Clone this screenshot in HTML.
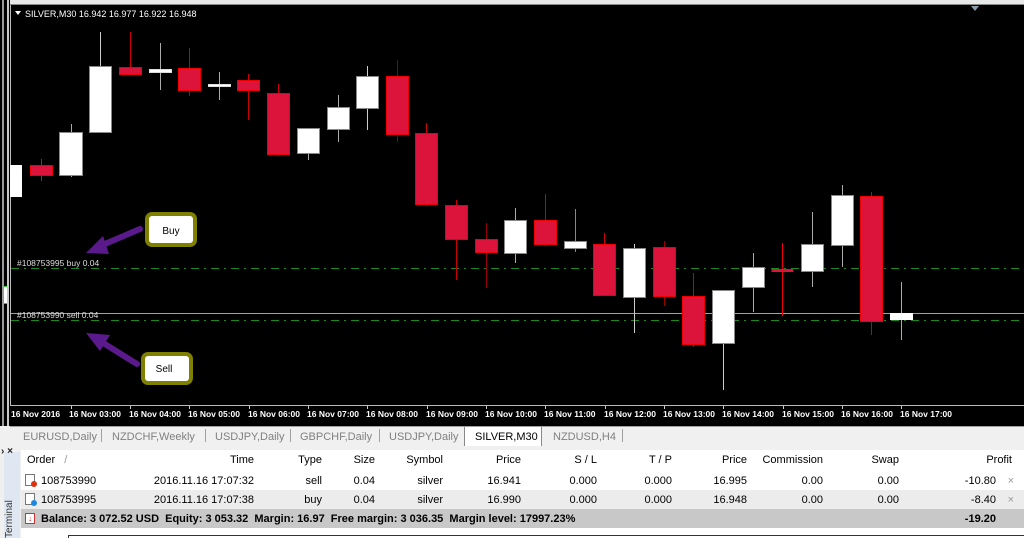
<!DOCTYPE html>
<html><head><meta charset="utf-8"><style>
*{margin:0;padding:0;box-sizing:border-box}
body{width:1024px;height:538px;overflow:hidden;background:#f0f0f0;font-family:"Liberation Sans",sans-serif;position:relative}
.abs{position:absolute}
.tabs{left:10px;top:426px;width:1014px;height:19px;background:#f0f0f0;border-top:1px solid #a0a0a0;font-size:11px;color:#808080}
.tab{position:absolute;top:4px}
.sep{position:absolute;top:2px;width:1px;height:13px;background:#a0a0a0}
.tbl{left:21px;top:450px;width:1003px;height:80px;font-size:11px;color:#000}
.row{position:absolute;left:0;width:1003px;height:19px}
.c{position:absolute;top:4px;text-align:right}
</style></head><body>
<div class="abs" style="left:0;top:0;width:1024px;height:5px;background:#e8e8e8;border-bottom:1px solid #888"></div>
<div class="abs" style="left:0;top:0;width:10px;height:426px;background:#000"></div>
<div class="abs" style="left:2px;top:0;width:2px;height:426px;background:#9a9a9a"></div>
<div class="abs" style="left:7px;top:0;width:2px;height:426px;background:#c8c8c8"></div>
<div class="abs" style="left:4px;top:286px;width:3px;height:18px;background:#fff;border-top:1px solid #3c3;border-bottom:1px solid #3c3"></div>
<svg class="abs" style="left:10px;top:5px" width="1014" height="421" viewBox="10 5 1014 421" font-family="Liberation Sans, sans-serif">
<rect x="10" y="5" width="1014" height="421" fill="#000"/>
<line x1="10.5" y1="5" x2="10.5" y2="405" stroke="#bbb"/>
<line x1="10" y1="405.5" x2="1024" y2="405.5" stroke="#bbb"/>
<polygon points="971,6 979,6 975,11" fill="#8a9aa8"/>
<polygon points="15,11 21,11 18,15" fill="#fff"/>
<text x="25" y="17" fill="#fff" font-size="9">SILVER,M30  16.942 16.977 16.922 16.948</text>
<g stroke="#1a8a1a" stroke-width="1" stroke-dasharray="8,5,2,5">
<line x1="11" y1="268.5" x2="1024" y2="268.5"/>
<line x1="11" y1="320.5" x2="1024" y2="320.5"/>
</g>
<line x1="11" y1="313.5" x2="1024" y2="313.5" stroke="#a0a0a8"/>
<text x="17" y="266" fill="#ddd" font-size="8.5">#108753995 buy 0.04</text>
<text x="17" y="318" fill="#ddd" font-size="8.5">#108753990 sell 0.04</text>
<g stroke-width="1">
<rect x="10" y="165" width="12" height="32" fill="#fff"/>
<line x1="41.5" y1="159" x2="41.5" y2="181" stroke="#e00"/><rect x="30.5" y="165.5" width="22" height="10" fill="#dc143c" stroke="#e00"/>
<line x1="71.5" y1="124" x2="71.5" y2="177" stroke="#aaa"/><rect x="59.5" y="132.5" width="23" height="43" fill="#fff" stroke="#888"/>
<line x1="100.5" y1="32" x2="100.5" y2="132" stroke="#ccc"/><rect x="89.5" y="66.5" width="22" height="66" fill="#fff" stroke="#888"/>
<line x1="130.5" y1="32" x2="130.5" y2="74" stroke="#c00"/><rect x="119.5" y="67.5" width="22" height="7" fill="#dc143c" stroke="#e00"/>
<line x1="160.5" y1="43" x2="160.5" y2="90" stroke="#aaa"/><rect x="149.5" y="69.5" width="22" height="3" fill="#fff" stroke="#ddd"/>
<line x1="189.5" y1="48" x2="189.5" y2="96" stroke="#c00"/><rect x="178.5" y="68.5" width="22" height="22" fill="#dc143c" stroke="#e00"/>
<line x1="219.5" y1="72" x2="219.5" y2="100" stroke="#aaa"/><rect x="208.5" y="84.5" width="22" height="2" fill="#fff" stroke="#ddd"/>
<line x1="248.5" y1="74" x2="248.5" y2="120" stroke="#c00"/><rect x="237.5" y="80.5" width="22" height="10" fill="#dc143c" stroke="#e00"/>
<line x1="278.5" y1="84" x2="278.5" y2="156" stroke="#c00"/><rect x="267.5" y="93.5" width="22" height="61" fill="#dc143c" stroke="#e00"/>
<line x1="308.5" y1="128" x2="308.5" y2="160" stroke="#aaa"/><rect x="297.5" y="128.5" width="22" height="25" fill="#fff" stroke="#888"/>
<line x1="338.5" y1="95" x2="338.5" y2="142" stroke="#aaa"/><rect x="327.5" y="107.5" width="22" height="22" fill="#fff" stroke="#888"/>
<line x1="367.5" y1="66" x2="367.5" y2="130" stroke="#ccc"/><rect x="356.5" y="76.5" width="22" height="32" fill="#fff" stroke="#888"/>
<line x1="397.5" y1="60" x2="397.5" y2="142" stroke="#800"/><rect x="386.5" y="76.5" width="22" height="58" fill="#dc143c" stroke="#e00"/>
<line x1="426.5" y1="123" x2="426.5" y2="206" stroke="#c00"/><rect x="415.5" y="133.5" width="22" height="71" fill="#dc143c" stroke="#e00"/>
<line x1="456.5" y1="200" x2="456.5" y2="280" stroke="#c00"/><rect x="445.5" y="205.5" width="22" height="34" fill="#dc143c" stroke="#e00"/>
<line x1="486.5" y1="223" x2="486.5" y2="288" stroke="#900"/><rect x="475.5" y="239.5" width="22" height="13" fill="#dc143c" stroke="#e00"/>
<line x1="515.5" y1="208" x2="515.5" y2="263" stroke="#aaa"/><rect x="504.5" y="220.5" width="22" height="33" fill="#fff" stroke="#888"/>
<line x1="545.5" y1="194" x2="545.5" y2="246" stroke="#c00"/><rect x="534.5" y="220.5" width="22" height="24" fill="#dc143c" stroke="#e00"/>
<line x1="575.5" y1="209" x2="575.5" y2="252" stroke="#888"/><rect x="564.5" y="241.5" width="22" height="7" fill="#fff" stroke="#888"/>
<line x1="604.5" y1="233" x2="604.5" y2="296" stroke="#c00"/><rect x="593.5" y="244.5" width="22" height="51" fill="#dc143c" stroke="#e00"/>
<line x1="634.5" y1="244" x2="634.5" y2="333" stroke="#ccc"/><rect x="623.5" y="248.5" width="22" height="49" fill="#fff" stroke="#888"/>
<line x1="664.5" y1="241" x2="664.5" y2="306" stroke="#900"/><rect x="653.5" y="247.5" width="22" height="49" fill="#dc143c" stroke="#e00"/>
<line x1="693.5" y1="273" x2="693.5" y2="347" stroke="#c00"/><rect x="682.5" y="296.5" width="22" height="48" fill="#dc143c" stroke="#e00"/>
<line x1="723.5" y1="290" x2="723.5" y2="390" stroke="#ccc"/><rect x="712.5" y="290.5" width="22" height="53" fill="#fff" stroke="#888"/>
<line x1="753.5" y1="253" x2="753.5" y2="312" stroke="#aaa"/><rect x="742.5" y="267.5" width="22" height="20" fill="#fff" stroke="#888"/>
<line x1="782.5" y1="243" x2="782.5" y2="316" stroke="#e00"/><rect x="771.5" y="269" width="22" height="3" fill="#dc143c"/>
<line x1="812.5" y1="212" x2="812.5" y2="287" stroke="#aaa"/><rect x="801.5" y="244.5" width="22" height="27" fill="#fff" stroke="#888"/>
<line x1="842.5" y1="185" x2="842.5" y2="267" stroke="#aaa"/><rect x="831.5" y="195.5" width="22" height="50" fill="#fff" stroke="#888"/>
<line x1="871.5" y1="192" x2="871.5" y2="335" stroke="#c00"/><rect x="860.5" y="196.5" width="22" height="125" fill="#dc143c" stroke="#e00"/>
<line x1="901.5" y1="282" x2="901.5" y2="340" stroke="#aaa"/><rect x="890" y="313" width="23" height="7" fill="#fff"/>
</g>
<g fill="#5b1a8b" stroke="#5b1a8b">
<line x1="140" y1="229" x2="100" y2="246" stroke-width="6" stroke-linecap="round"/>
<polygon points="86,253 103,236 109,254" stroke="none"/>
<line x1="137" y1="364" x2="100" y2="341" stroke-width="6" stroke-linecap="round"/>
<polygon points="86,333 110,335 100,351" stroke="none"/>
</g>
<rect x="147" y="214" width="48" height="31" rx="5" fill="#fff" stroke="#808000" stroke-width="4"/>
<text x="171" y="234" fill="#000" font-size="10" text-anchor="middle">Buy</text>
<rect x="143" y="354" width="48" height="29" rx="5" fill="#fff" stroke="#808000" stroke-width="4"/>
<text x="164" y="372" fill="#000" font-size="10" text-anchor="middle">Sell</text>
<g fill="#fff" font-size="8.5" font-weight="bold">
<text x="11" y="417">16 Nov 2016</text>
<text x="69" y="417">16 Nov 03:00</text>
<text x="129" y="417">16 Nov 04:00</text>
<text x="188" y="417">16 Nov 05:00</text>
<text x="248" y="417">16 Nov 06:00</text>
<text x="307" y="417">16 Nov 07:00</text>
<text x="366" y="417">16 Nov 08:00</text>
<text x="426" y="417">16 Nov 09:00</text>
<text x="485" y="417">16 Nov 10:00</text>
<text x="544" y="417">16 Nov 11:00</text>
<text x="604" y="417">16 Nov 12:00</text>
<text x="663" y="417">16 Nov 13:00</text>
<text x="722" y="417">16 Nov 14:00</text>
<text x="782" y="417">16 Nov 15:00</text>
<text x="841" y="417">16 Nov 16:00</text>
<text x="900" y="417">16 Nov 17:00</text>
</g>
<g stroke="#ccc"><line x1="71.5" y1="406" x2="71.5" y2="409"/><line x1="130.5" y1="406" x2="130.5" y2="409"/><line x1="189.5" y1="406" x2="189.5" y2="409"/><line x1="249.5" y1="406" x2="249.5" y2="409"/><line x1="308.5" y1="406" x2="308.5" y2="409"/><line x1="367.5" y1="406" x2="367.5" y2="409"/><line x1="427.5" y1="406" x2="427.5" y2="409"/><line x1="486.5" y1="406" x2="486.5" y2="409"/><line x1="545.5" y1="406" x2="545.5" y2="409"/><line x1="605.5" y1="406" x2="605.5" y2="409"/><line x1="664.5" y1="406" x2="664.5" y2="409"/><line x1="723.5" y1="406" x2="723.5" y2="409"/><line x1="783.5" y1="406" x2="783.5" y2="409"/><line x1="842.5" y1="406" x2="842.5" y2="409"/><line x1="901.5" y1="406" x2="901.5" y2="409"/></g>
</svg>
<div class="abs tabs">
<span class="tab" style="left:13px">EURUSD,Daily</span><div class="sep" style="left:91px"></div>
<span class="tab" style="left:102px">NZDCHF,Weekly</span><div class="sep" style="left:195px"></div>
<span class="tab" style="left:205px">USDJPY,Daily</span><div class="sep" style="left:280px"></div>
<span class="tab" style="left:290px">GBPCHF,Daily</span><div class="sep" style="left:369px"></div>
<span class="tab" style="left:379px">USDJPY,Daily</span>
<div style="position:absolute;left:454px;top:0;width:78px;height:19px;background:#fff;border:1px solid #888;border-top:none;border-bottom:none"></div>
<span class="tab" style="left:465px;color:#000">SILVER,M30</span>
<span class="tab" style="left:543px">NZDUSD,H4</span><div class="sep" style="left:612px"></div>
</div>
<div class="abs" style="left:0;top:445px;width:21px;height:93px;background:#f0f0f0"></div>
<div class="abs" style="left:4px;top:452px;width:16px;height:86px;background:#dfe8f2"></div>
<div class="abs" style="left:1px;top:446px;font-size:10px;font-weight:bold;color:#222">› ×</div>
<div class="abs" style="left:4px;top:538px;transform:rotate(-90deg);transform-origin:0 0;font-size:10px;color:#333;white-space:nowrap">Terminal</div>
<div class="abs tbl">
<div class="row" style="top:0;height:21px;background:#fff">
<span class="c" style="left:6px;text-align:left">Order&nbsp;&nbsp;&nbsp;<span style="color:#999">/</span></span>
<span class="c" style="right:770px">Time</span>
<span class="c" style="right:702px">Type</span>
<span class="c" style="right:649px">Size</span>
<span class="c" style="right:581px">Symbol</span>
<span class="c" style="right:503px">Price</span>
<span class="c" style="right:427px">S / L</span>
<span class="c" style="right:352px">T / P</span>
<span class="c" style="right:277px">Price</span>
<span class="c" style="right:201px">Commission</span>
<span class="c" style="right:125px">Swap</span>
<span class="c" style="right:12px">Profit</span>
</div>
<div class="row" style="top:21px;background:#fff">
<span style="position:absolute;left:4px;top:3px;width:10px;height:12px;border:1px solid #777;background:#fff"></span><span style="position:absolute;left:10px;top:10px;width:6px;height:6px;border-radius:3px;background:#e03010"></span>
<span class="c" style="left:20px">108753990</span>
<span class="c" style="right:770px">2016.11.16 17:07:32</span>
<span class="c" style="right:702px">sell</span>
<span class="c" style="right:649px">0.04</span>
<span class="c" style="right:581px">silver</span>
<span class="c" style="right:503px">16.941</span>
<span class="c" style="right:427px">0.000</span>
<span class="c" style="right:352px">0.000</span>
<span class="c" style="right:277px">16.995</span>
<span class="c" style="right:201px">0.00</span>
<span class="c" style="right:125px">0.00</span>
<span class="c" style="right:28px">-10.80</span><span class="c" style="right:10px;color:#999">×</span>
</div>
<div class="row" style="top:40px;background:#ececec">
<span style="position:absolute;left:4px;top:3px;width:10px;height:12px;border:1px solid #777;background:#fff"></span><span style="position:absolute;left:10px;top:10px;width:6px;height:6px;border-radius:3px;background:#1a8ae0"></span>
<span class="c" style="left:20px">108753995</span>
<span class="c" style="right:770px">2016.11.16 17:07:38</span>
<span class="c" style="right:702px">buy</span>
<span class="c" style="right:649px">0.04</span>
<span class="c" style="right:581px">silver</span>
<span class="c" style="right:503px">16.990</span>
<span class="c" style="right:427px">0.000</span>
<span class="c" style="right:352px">0.000</span>
<span class="c" style="right:277px">16.948</span>
<span class="c" style="right:201px">0.00</span>
<span class="c" style="right:125px">0.00</span>
<span class="c" style="right:28px">-8.40</span><span class="c" style="right:10px;color:#999">×</span>
</div>
<div class="row" style="top:59px;height:19px;background:#c8c8c8;font-weight:bold">
<span style="position:absolute;left:4px;top:4px;width:10px;height:11px;background:#fff;border:1px solid #c33;color:#c33;font-size:8px;line-height:9px;text-align:center">↓</span>
<span class="c" style="left:20px;text-align:left;white-space:nowrap">Balance: 3 072.52 USD&nbsp; Equity: 3 053.32&nbsp; Margin: 16.97&nbsp; Free margin: 3 036.35&nbsp; Margin level: 17997.23%</span>
<span class="c" style="right:28px">-19.20</span>
</div>
</div>
<div class="abs" style="left:21px;top:528px;width:1003px;height:10px;background:#fff"></div>
<div class="abs" style="left:68px;top:535px;width:956px;height:3px;border-top:1px solid #333;border-left:1px solid #333"></div>
</body></html>
